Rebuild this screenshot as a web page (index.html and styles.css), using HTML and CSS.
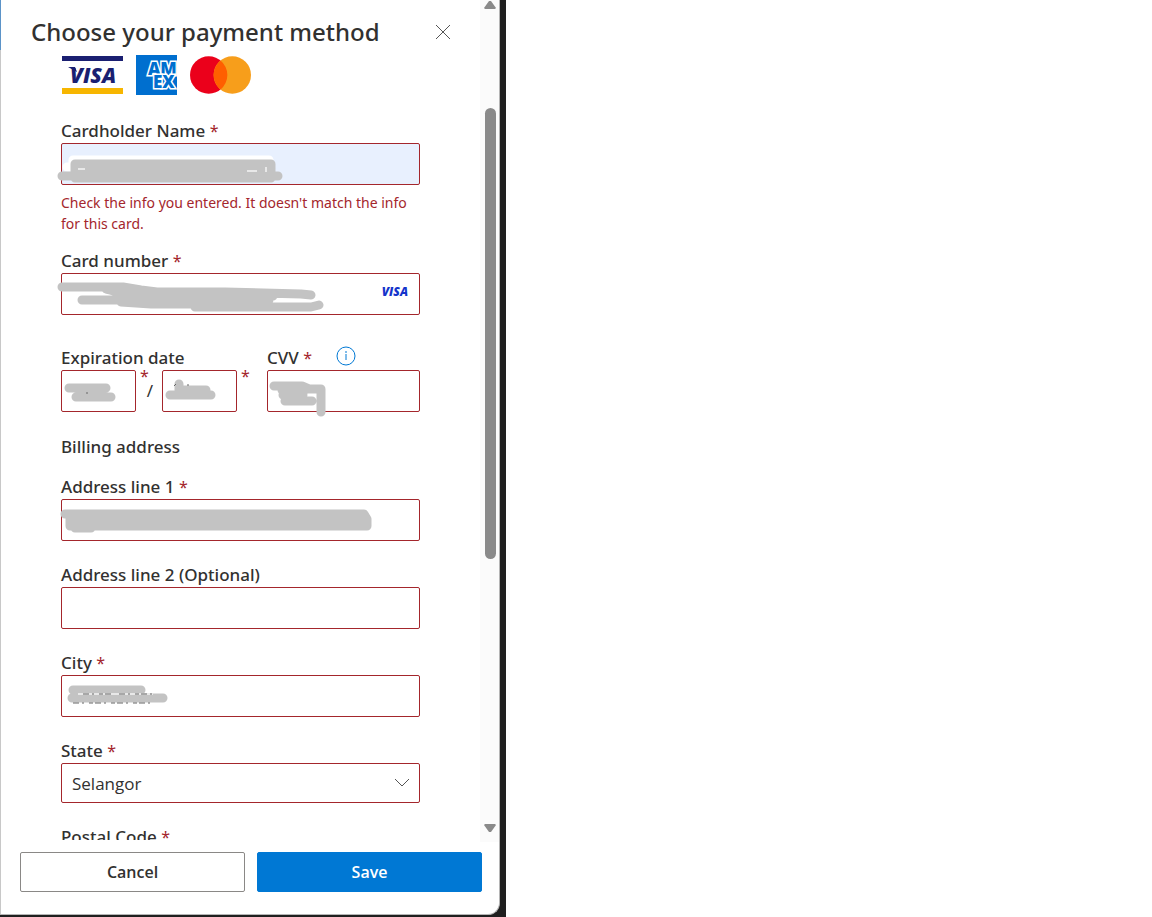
FILE: index.html
```
<!DOCTYPE html>
<html lang="en">
<head>
    <meta charset="UTF-8">
    <meta name="viewport" content="width=device-width, initial-scale=1.0">
    <title>Choose your payment method</title>
    <link rel="stylesheet" href="styles.css">
</head>
<body>
    <div class="frame">
        <form class="panel">
            <div class="scroll-area">
                <div class="content">
                    <header class="panel-header">
                        <h1>Choose your payment method</h1>
                        <button type="button" class="close" aria-label="Close">
                            <svg width="16" height="16" viewBox="0 0 16 16" fill="none" stroke="#555"><path d="M1 1l14 14M15 1L1 15"/></svg>
                        </button>
                    </header>

                    <div class="fields">
                        <div class="cards">
                            <svg class="visa" width="61" height="40" viewBox="0 0 61 40">
                                <path fill="#1a1f71" d="M0 1h61v5H0z"/>
                                <path fill="#f7b600" d="M0 33h61v6H0z"/>
                                <path fill="#1a1f71" d="M6 12h7l2 5z"/>
                                <text x="8" y="28" font-size="21">VISA</text>
                            </svg>
                            <svg class="amex" width="41" height="40" viewBox="0 0 41 40">
                                <path fill="#006fcf" d="M0 0h41v40H0z"/>
                                <text font-size="17"><tspan x="12" y="20">AM</tspan><tspan x="17" y="33">EX</tspan></text>
                            </svg>
                            <svg width="61" height="40" viewBox="0 0 62 40">
                                <circle cx="19" cy="20" r="19" fill="#eb001b"/>
                                <circle cx="43" cy="20" r="19" fill="#f79e1b"/>
                                <path fill="#ff5f00" d="M31 5.300a19 19 0 0 1 0 29.400a19 19 0 0 1 0-29.400z"/>
                            </svg>
                        </div>

                        <div class="field name-field">
                            <label for="name">Cardholder Name <span class="req">*</span></label>
                            <div class="control">
                                <input type="text" id="name" class="autofilled" aria-describedby="nameError">
                                <svg class="scribble" fill="none">
                                    <path class="erase" d="M6 24H12V17H208"/>
                                    <path d="M1 33H217M14 21H210V35H14zM14 25H210M14 29H210"/>
                                    <path class="gap" d="M17 26h7M186 28h10M205 24v5"/>
                                </svg>
                            </div>
                            <p class="error" id="nameError">Check the info you entered. It doesn't match the info for this card.</p>
                        </div>

                        <div class="field card-field">
                            <label for="number">Card number <span class="req">*</span></label>
                            <div class="control">
                                <input type="text" id="number">
                                <svg class="scribble" fill="none">
                                    <path d="M1 14H62L80 17L96 19H164L240 21L250 22M21 27H85L45 16L90 26H190M60 29L90 31H200M85 23H212M134 34H250L258 32M170 27H208"/>
                                </svg>
                                <span class="brand">VISA</span>
                            </div>
                        </div>

                        <div class="field-row">
                            <fieldset class="expiry">
                                <legend>Expiration date</legend>
                                <div class="control">
                                    <input type="text" aria-label="Month">
                                    <svg class="scribble" fill="none">
                                        <path d="M8 18H45M15 27H50"/>
                                        <path class="ink" d="M26 22v2"/>
                                    </svg>
                                </div>
                                <span class="req">*</span>
                                <span class="slash">/</span>
                                <div class="control">
                                    <input type="text" aria-label="Year">
                                    <svg class="scribble" fill="none">
                                        <path d="M8 25H49M17 14V20H44"/>
                                        <path class="ink" d="M12 16l2-2M25 15h2"/>
                                    </svg>
                                </div>
                                <span class="req">*</span>
                            </fieldset>
                            <div class="cvv">
                                <div class="label-line">
                                    <label for="cvv">CVV <span class="req">*</span></label>
                                    <button type="button" class="info" aria-label="About CVV">
                                        <svg width="20" height="20" viewBox="0 0 20 20" fill="none" stroke="#0078d4">
                                            <circle cx="10" cy="10" r="9"/>
                                            <path d="M10 8v6M10 5v2"/>
                                        </svg>
                                    </button>
                                </div>
                                <div class="control">
                                    <input type="text" id="cvv">
                                    <svg class="scribble" fill="none">
                                        <path d="M7 16H35L42 19H54V42M15 20H38M16 25H36M18 31H45"/>
                                    </svg>
                                </div>
                            </div>
                        </div>

                        <h2>Billing address</h2>

                        <div class="field">
                            <label for="address1">Address line 1 <span class="req">*</span></label>
                            <div class="control">
                                <input type="text" id="address1">
                                <svg class="scribble" fill="none">
                                    <path d="M4 15H303L306 20V27H9V18M14 29H30M9 21H304"/>
                                </svg>
                            </div>
                        </div>

                        <div class="field">
                            <label for="address2">Address line 2 (Optional)</label>
                            <div class="control">
                                <input type="text" id="address2">
                            </div>
                        </div>

                        <div class="field">
                            <label for="city">City <span class="req">*</span></label>
                            <div class="control">
                                <input type="text" id="city">
                                <svg class="scribble" fill="none">
                                    <path d="M12 15H80M11 23H102"/>
                                    <path class="gap" d="M17 19H92"/>
                                    <path class="ink" stroke-dasharray="6 3 2 5 4 2" d="M22 19H50M58 19H92M12 28H92"/>
                                </svg>
                            </div>
                        </div>

                        <div class="field">
                            <label for="state">State <span class="req">*</span></label>
                            <div class="control">
                                <select id="state">
                                    <option>Selangor</option>
                                </select>
                                <svg class="chevron" width="16" height="9" viewBox="0 0 16 9" fill="none" stroke="#555"><path d="M1 1l7 7 7-7"/></svg>
                            </div>
                        </div>

                        <div class="field">
                            <label for="postal">Postal Code <span class="req">*</span></label>
                            <div class="control">
                                <input type="text" id="postal">
                            </div>
                        </div>
                    </div>
                </div>

                <div class="scrollbar">
                    <svg width="12" height="9" viewBox="0 0 12 9"><path fill="#8a8a8a" d="M5 1h2l5 7-1 1H1L0 8z"/></svg>
                    <div class="track"><div class="thumb"></div></div>
                    <svg width="12" height="9" viewBox="0 0 12 9"><path fill="#8a8a8a" d="M5 8h2l5-7-1-1H1L0 1z"/></svg>
                </div>
            </div>

            <div class="actions">
                <button type="button" class="btn">Cancel</button>
                <button type="submit" class="btn primary">Save</button>
            </div>
        </form>
    </div>
</body>
</html>
```
FILE: styles.css
```
* {
    box-sizing: border-box;
}

body {
    margin: 0;
    background-color: #fff;
    color: #323130;
    font-family: "Noto Sans", sans-serif;
    font-size: 17px;
    line-height: 24px;
}

.frame {
    width: 100%;
    max-width: 506px;
    height: 100vh;
    padding: 0 6px 2px 0;
    background-color: #1f1f1f;
}

.panel {
    display: flex;
    flex-direction: column;
    height: 100%;
    background: linear-gradient(#5b93c8 50px, #c8c8c8 50px) left / 1px 100% no-repeat #fff;
    border-right: 1px solid #b5b5b5;
    border-bottom: 1px solid #b5b5b5;
    border-radius: 0 0 12px 0;
}

/* header + fields, the scrollbar runs down the right */
.scroll-area {
    display: flex;
    flex: 1;
    min-height: 0;
}

.content {
    flex: 1;
    overflow: hidden;
    margin-bottom: 2px;
}

.panel-header {
    display: flex;
    align-items: center;
    justify-content: space-between;
    height: 55px;
    padding: 8px 25px 0 31px;
}

h1 {
    margin: 0;
    font-size: 24px;
    font-weight: 500;
    line-height: 32px;
}

.close,
.info {
    display: flex;
    padding: 0;
    border: none;
    background: none;
    cursor: pointer;
}

.close {
    padding: 4px;
}

.fields {
    padding: 0 60px 0 61px;
}

.cards {
    display: flex;
    gap: 13px;
    margin-bottom: 24px;
    padding-left: 1px;
}

.cards text,
.brand {
    font-family: "Open Sans", sans-serif;
    font-weight: 800;
}

.visa text {
    fill: #1a1f71;
    font-style: italic;
}

.amex text {
    fill: #006fcf;
    stroke: #fff;
    stroke-width: 3px;
    paint-order: stroke;
}

.field {
    margin-bottom: 22px;
}

.name-field {
    margin-bottom: 15px;
}

.card-field {
    margin-bottom: 31px;
}

label,
legend,
h2 {
    display: block;
    margin: 0;
    padding: 0;
    font-size: 17px;
    font-weight: 500;
    line-height: 24px;
}

.req {
    color: #a4262c;
    font-size: 16px;
    font-weight: 400;
}

.control {
    position: relative;
}

input,
select {
    display: block;
    width: 100%;
    height: 42px;
    padding: 0 10px;
    border: 1px solid #a4262c;
    border-radius: 2px;
    background-color: #fff;
    color: #323130;
    font-family: "Open Sans", sans-serif;
    font-size: 17px;
}

select {
    height: 40px;
    appearance: none;
}

.autofilled {
    background-color: #e8f0fe;
}

.error {
    margin: 7px 0 0;
    color: #a4262c;
    font-size: 14px;
    line-height: 21px;
}

.brand {
    position: absolute;
    top: 7px;
    right: 12px;
    color: #1434cb;
    font-size: 12px;
    font-style: italic;
}

.chevron {
    position: absolute;
    top: 15px;
    right: 10px;
    pointer-events: none;
}

/* marker strokes over the filled in values */
.scribble {
    position: absolute;
    top: 0;
    left: 0;
    width: 100%;
    height: 100%;
    overflow: visible;
    pointer-events: none;
    stroke: #c3c3c3;
    stroke-width: 9px;
    stroke-linecap: round;
    stroke-linejoin: round;
}

.scribble .erase {
    stroke: #fff;
}

.scribble .gap {
    stroke: #e8e8e8;
    stroke-width: 2px;
    stroke-linecap: butt;
}

.scribble .ink {
    stroke: #666;
    stroke-width: 1px;
    stroke-linecap: butt;
}

.field-row {
    display: flex;
    gap: 18px;
    margin-bottom: 23px;
}

.expiry {
    display: flex;
    margin: 0;
    padding: 0;
    border: none;
}

.expiry .control {
    flex: none;
    width: 75px;
}

.expiry .req {
    flex: none;
    width: 8px;
    height: 12px;
    margin-left: 4px;
    line-height: 12px;
}

.slash {
    align-self: center;
    width: 8px;
    margin: 0 8px 0 -2px;
    text-align: center;
}

.cvv {
    flex: 1;
}

.label-line {
    display: flex;
    gap: 24px;
}

.info {
    height: 20px;
}

h2 {
    margin-bottom: 16px;
}

.scrollbar {
    display: flex;
    flex-direction: column;
    align-items: center;
    width: 19px;
    padding: 0 0 9px 1px;
    background-color: #fbfbfb;
}

.track {
    flex: 1;
    width: 11px;
    padding-top: 99px;
}

.thumb {
    height: 63%;
    border-radius: 6px;
    background-color: #8a8a8a;
}

.actions {
    display: flex;
    gap: 12px;
    padding: 10px 17px 22px 20px;
}

.btn {
    flex: 1;
    height: 40px;
    border: 1px solid #8a8886;
    border-radius: 2px;
    background-color: #fff;
    color: #323130;
    font-family: "Open Sans", sans-serif;
    font-size: 16px;
    font-weight: 600;
    cursor: pointer;
}

.primary {
    border-color: #0078d4;
    background-color: #0078d4;
    color: #fff;
}
```
